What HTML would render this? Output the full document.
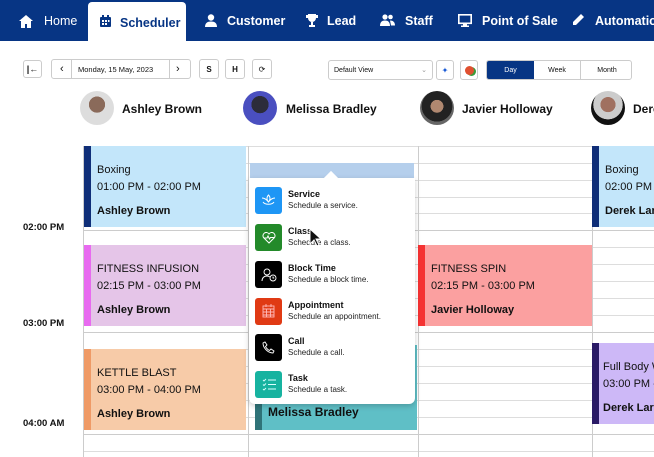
<!DOCTYPE html>
<html><head><style>
*{box-sizing:border-box;margin:0;padding:0}
body{width:654px;height:457px;overflow:hidden;background:#fff;font-family:"Liberation Sans",sans-serif;position:relative;color:#111}
.a{position:absolute}
.nav{left:0;top:0;width:654px;height:41px;background:#073584}
.tab{color:#fff;font-size:12.5px;font-weight:bold;top:14px}
.act{left:88px;top:2px;width:98px;height:39px;background:#fff;border-radius:4px 4px 0 0}
.btn{border:1px solid #ccc;border-radius:3px;background:#fff;height:20px;font-size:8px;display:flex;align-items:center;justify-content:center}
.name{font-size:12px;font-weight:bold;top:102px}
.av{width:34px;height:34px;border-radius:50%;top:91px;overflow:hidden}
.hl{left:83px;width:571px;height:1px;background:#ddd}
.vl{top:146px;width:1px;height:311px;background:#ccc}
.ev{font-size:11px;padding:0 0 0 13px}
.ev .bar{position:absolute;left:0;top:0;bottom:0;width:7px}
.ev div.t{position:absolute;left:13px}
.time{font-size:9.5px;font-weight:bold;left:23px}
.mi{left:255px;width:150px;height:30px}
.ic{position:absolute;left:0;top:0;width:27px;height:27px;border-radius:3px}
.mt{position:absolute;left:33px;top:2px;font-size:9px;font-weight:bold}
.ms{position:absolute;left:33px;top:14px;font-size:8px;color:#222}
</style></head><body>
<div class="a nav"></div>
<div class="a act"></div>
<svg class="a" style="left:19px;top:15px" width="14" height="13" viewBox="0 0 14 13"><path d="M7 0L0 6h2v7h4V9h2v4h4V6h2z" fill="#fff"/></svg>
<div class="a tab" style="left:44px;font-weight:normal">Home</div>
<svg class="a" style="left:100px;top:15px" width="11" height="12" viewBox="0 0 11 12"><rect x="0" y="2" width="11" height="10" rx="1" fill="#073584"/><rect x="2" y="0" width="2" height="3" fill="#073584"/><rect x="7" y="0" width="2" height="3" fill="#073584"/><g fill="#fff"><rect x="2" y="5" width="2" height="2"/><rect x="5" y="5" width="2" height="2"/><rect x="8" y="5" width="1.5" height="2"/><rect x="2" y="8" width="2" height="2"/><rect x="5" y="8" width="2" height="2"/></g></svg>
<div class="a tab" style="left:120px;top:16px;color:#073584">Scheduler</div>
<svg class="a" style="left:205px;top:14px" width="12" height="13" viewBox="0 0 12 13"><circle cx="6" cy="3.5" r="3.2" fill="#fff"/><path d="M0 13c0-4 2.5-5.5 6-5.5S12 9 12 13z" fill="#fff"/></svg>
<div class="a tab" style="left:227px">Customer</div>
<svg class="a" style="left:305px;top:14px" width="14" height="13" viewBox="0 0 14 13"><path d="M3 0h8v4a4 4 0 01-8 0zM1 1h2v3H1zM11 1h2v3h-2zM6 8h2v3H6zM4 11h6v2H4z" fill="#fff"/></svg>
<div class="a tab" style="left:327px">Lead</div>
<svg class="a" style="left:380px;top:14px" width="15" height="12" viewBox="0 0 15 12"><circle cx="5" cy="3" r="2.6" fill="#fff"/><circle cx="10.5" cy="3" r="2.3" fill="#fff"/><path d="M0 12c0-4 2-5.5 5-5.5s5 1.5 5 5.5zM10 6.5c3 0 5 1.5 5 5h-4z" fill="#fff"/></svg>
<div class="a tab" style="left:405px">Staff</div>
<svg class="a" style="left:458px;top:14px" width="14" height="13" viewBox="0 0 14 13"><rect x="0.8" y="0.8" width="12.4" height="8.5" fill="none" stroke="#fff" stroke-width="1.6"/><rect x="5" y="10" width="4" height="1.5" fill="#fff"/><rect x="3" y="11.5" width="8" height="1.5" fill="#fff"/></svg>
<div class="a tab" style="left:482px">Point of Sale</div>
<svg class="a" style="left:572px;top:14px" width="12" height="12" viewBox="0 0 12 12"><path d="M9 0l3 3-8 8H1V8z" fill="#fff"/></svg>
<div class="a tab" style="left:595px">Automation</div>

<div class="a btn" style="left:23px;top:60px;width:19px;height:18px;font-size:9px;font-weight:bold">|←</div>
<div class="a btn" style="left:51px;top:59px;width:140px">
<span style="position:absolute;left:8px;font-size:11px">‹</span>
<span style="position:absolute;left:19px;top:0;bottom:0;width:1px;background:#ccc"></span>
<span style="position:absolute;left:26px;font-size:7.5px">Monday, 15 May, 2023</span>
<span style="position:absolute;left:117px;top:0;bottom:0;width:1px;background:#ccc"></span>
<span style="position:absolute;left:124px;font-size:11px">›</span></div>
<div class="a btn" style="left:199px;top:59px;width:20px;font-weight:bold">S</div>
<div class="a btn" style="left:225px;top:59px;width:20px;font-weight:bold">H</div>
<div class="a btn" style="left:252px;top:59px;width:20px">⟳</div>
<div class="a btn" style="left:328px;top:60px;width:105px;justify-content:flex-start;padding-left:5px;font-size:7px">Default View<span style="position:absolute;right:5px;color:#999">⌄</span></div>
<div class="a btn" style="left:436px;top:60px;width:18px;color:#1a5bd6">✦</div>
<div class="a btn" style="left:460px;top:60px;width:18px"><span style="width:9px;height:9px;border-radius:50%;background:#e05030;display:block;box-shadow:2px 1px 0 #3a9a3a"></span></div>
<div class="a btn" style="left:486px;top:60px;width:146px;overflow:hidden;display:block">
<div class="a" style="left:0;top:0;width:47px;height:20px;background:#073584;color:#fff;font-size:7px;text-align:center;line-height:19px">Day</div>
<div class="a" style="left:47px;top:0;width:47px;height:20px;font-size:7px;text-align:center;line-height:19px;border-right:1px solid #ccc">Week</div>
<div class="a" style="left:94px;top:0;width:52px;height:20px;font-size:7px;text-align:center;line-height:19px">Month</div></div>

<div class="a av" style="left:80px;background:radial-gradient(circle at 50% 40%,#8a6a5a 0 30%,#ddd 31%)"></div>
<div class="a name" style="left:122px">Ashley Brown</div>
<div class="a av" style="left:243px;background:radial-gradient(circle at 50% 40%,#2c2c3a 0 32%,#4a4fc0 33%)"></div>
<div class="a name" style="left:286px">Melissa Bradley</div>
<div class="a av" style="left:420px;background:radial-gradient(circle at 50% 45%,#b08870 0 25%,#222 26% 60%,#666 61%)"></div>
<div class="a name" style="left:462px">Javier Holloway</div>
<div class="a av" style="left:591px;background:radial-gradient(circle at 50% 40%,#a07060 0 28%,#ccc 29% 55%,#111 56%)"></div>
<div class="a name" style="left:633px">Derek</div>

<!-- grid -->
<div class="a hl" style="top:146px"></div><div class="a hl" style="top:163px"></div><div class="a hl" style="top:180px"></div><div class="a hl" style="top:197px"></div><div class="a hl" style="top:213px"></div><div class="a hl" style="top:230px;background:#ccc"></div><div class="a hl" style="top:247px"></div><div class="a hl" style="top:264px"></div><div class="a hl" style="top:281px"></div><div class="a hl" style="top:298px"></div><div class="a hl" style="top:315px"></div><div class="a hl" style="top:332px;background:#ccc"></div><div class="a hl" style="top:349px"></div><div class="a hl" style="top:366px"></div><div class="a hl" style="top:383px"></div><div class="a hl" style="top:400px"></div><div class="a hl" style="top:417px"></div><div class="a hl" style="top:434px;background:#ccc"></div><div class="a hl" style="top:451px"></div>
<div class="a vl" style="left:83px"></div><div class="a vl" style="left:248px"></div><div class="a vl" style="left:418px"></div><div class="a vl" style="left:592px"></div>

<div class="a time" style="top:222px">02:00 PM</div>
<div class="a time" style="top:318px">03:00 PM</div>
<div class="a time" style="top:418px">04:00 AM</div>

<div class="a ev" style="left:84px;top:146px;width:162px;height:81px;background:#c3e6fa"><div class="bar" style="background:#0f2e78"></div><div class="t" style="top:18px">Boxing</div><div class="t" style="top:35px">01:00 PM - 02:00 PM</div><div class="t" style="top:59px;font-weight:bold">Ashley Brown</div></div>
<div class="a ev" style="left:84px;top:245px;width:162px;height:81px;background:#e5c5e8"><div class="bar" style="background:#e86af0"></div><div class="t" style="top:18px">FITNESS INFUSION</div><div class="t" style="top:35px">02:15 PM - 03:00 PM</div><div class="t" style="top:59px;font-weight:bold">Ashley Brown</div></div>
<div class="a ev" style="left:84px;top:349px;width:162px;height:81px;background:#f7cba8"><div class="bar" style="background:#ef9a66"></div><div class="t" style="top:18px">KETTLE BLAST</div><div class="t" style="top:35px">03:00 PM - 04:00 PM</div><div class="t" style="top:59px;font-weight:bold">Ashley Brown</div></div>
<div class="a ev" style="left:418px;top:245px;width:174px;height:81px;background:#fba0a0"><div class="bar" style="background:#f53232"></div><div class="t" style="top:18px">FITNESS SPIN</div><div class="t" style="top:35px">02:15 PM - 03:00 PM</div><div class="t" style="top:59px;font-weight:bold">Javier Holloway</div></div>
<div class="a ev" style="left:592px;top:146px;width:62px;height:81px;background:#c3e6fa;white-space:nowrap;overflow:hidden"><div class="bar" style="background:#0f2e78"></div><div class="t" style="top:18px">Boxing</div><div class="t" style="top:35px">02:00 PM - 03:00 PM</div><div class="t" style="top:59px;font-weight:bold">Derek Larson</div></div>
<div class="a ev" style="left:592px;top:343px;width:62px;height:81px;background:#cdb8f7;white-space:nowrap;overflow:hidden"><div class="bar" style="background:#2a1a66"></div><div class="t" style="left:11px;top:18px">Full Body Workout</div><div class="t" style="left:11px;top:35px">03:00 PM - 04:00 PM</div><div class="t" style="left:11px;top:59px;font-weight:bold">Derek Larson</div></div>
<div class="a ev" style="left:255px;top:345px;width:162px;height:85px;background:#5fbfc6"><div class="bar" style="background:#2f7378"></div><div class="t" style="top:60px;font-weight:bold;font-size:12px">Melissa Bradley</div></div>

<div class="a" style="left:250px;top:163px;width:164px;height:17px;background:#b5cfec"></div>
<div class="a" style="left:249px;top:178px;width:166px;height:226px;background:#fff;border-radius:0 0 6px 6px;box-shadow:0 2px 6px rgba(0,0,0,.2)"></div>
<div class="a" style="left:326px;top:173px;width:10px;height:10px;background:#fff;transform:rotate(45deg)"></div>

<div class="a mi" style="top:187px"><div class="ic" style="background:#1e96f5"></div><svg class="a" style="left:6px;top:7px" width="15" height="12" viewBox="0 0 15 12" fill="none" stroke="#fff" stroke-width="1"><path d="M7.5 1c2 2 2 5 0 7-2-2-2-5 0-7zM1 4c3 0 5 2 6.5 4M14 4c-3 0-5 2-6.5 4M2 8c2 3 9 3 11 0"/></svg><div class="mt">Service</div><div class="ms">Schedule a service.</div></div>
<div class="a mi" style="top:224px"><div class="ic" style="background:#238a2a"></div><svg class="a" style="left:7px;top:8px" width="14" height="12" viewBox="0 0 14 12" fill="none" stroke="#fff" stroke-width="1"><path d="M7 11L1.5 5.5A3 3 0 017 2a3 3 0 015.5 3.5z"/><path d="M2 6h3l1-2 1.5 3 1-1.5H12"/></svg><div class="mt">Class</div><div class="ms">Schedule a class.</div></div>
<div class="a mi" style="top:261px"><div class="ic" style="background:#000"></div><svg class="a" style="left:6px;top:7px" width="16" height="14" viewBox="0 0 16 14" fill="none" stroke="#fff" stroke-width="0.9"><circle cx="6" cy="4" r="3"/><path d="M1 13c0-3 2-5 5-5 1 0 2 .3 3 1"/><circle cx="12" cy="10" r="3"/><path d="M12 8.5V10h1.2"/></svg><div class="mt">Block Time</div><div class="ms">Schedule a block time.</div></div>
<div class="a mi" style="top:298px"><div class="ic" style="background:#e03a14"></div><svg class="a" style="left:7px;top:6px" width="13" height="14" viewBox="0 0 13 14" fill="none" stroke="#fbb" stroke-width="0.9"><rect x="1" y="2" width="11" height="11"/><path d="M1 5h11M1 8h11M1 11h11M4.5 5v8M8.5 5v8M4 0v3M9 0v3"/></svg><div class="mt">Appointment</div><div class="ms">Schedule an appointment.</div></div>
<div class="a mi" style="top:334px"><div class="ic" style="background:#000"></div><svg class="a" style="left:7px;top:7px" width="13" height="13" viewBox="0 0 13 13" fill="none" stroke="#fff" stroke-width="0.9"><path d="M3 1l2 3-1.5 1.5c1 2 2 3 4 4L9 8l3 2-1 2c-5 0-10-5-10-10z"/></svg><div class="mt">Call</div><div class="ms">Schedule a call.</div></div>
<div class="a mi" style="top:371px"><div class="ic" style="background:#17b3a0"></div><svg class="a" style="left:7px;top:7px" width="14" height="13" viewBox="0 0 14 13" fill="none" stroke="#dff" stroke-width="0.9"><path d="M1 2l1 1 2-2M1 6.5l1 1 2-2M1 11l1 1 2-2M6 2h8M6 6.5h8M6 11h8"/></svg><div class="mt">Task</div><div class="ms">Schedule a task.</div></div>

<svg class="a" style="left:309px;top:228px" width="13" height="19" viewBox="0 0 13 19"><path d="M1 1v15l4-4 3 6 2-1-3-6h5z" fill="#111" stroke="#fff" stroke-width="1"/></svg>
</body></html>
